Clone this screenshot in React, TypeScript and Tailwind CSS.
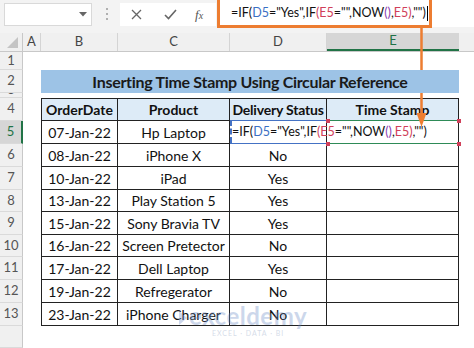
import React from "react";

const rows = [
  { n: 5, h: "h-[23px]", d: ["07-Jan-22", "Hp Laptop", ""] },
  { n: 6, h: "h-[23px]", d: ["08-Jan-22", "iPhone X", "No"] },
  { n: 7, h: "h-[23px]", d: ["10-Jan-22", "iPad", "Yes"] },
  { n: 8, h: "h-[22px]", d: ["13-Jan-22", "Play Station 5", "Yes"] },
  { n: 9, h: "h-[23px]", d: ["15-Jan-22", "Sony Bravia TV", "Yes"] },
  { n: 10, h: "h-[22px]", d: ["16-Jan-22", "Screen Pretector", "No"] },
  { n: 11, h: "h-[23px]", d: ["17-Jan-22", "Dell Laptop", "Yes"] },
  { n: 12, h: "h-[23px]", d: ["19-Jan-22", "Refregerator", "No"] },
  { n: 13, h: "h-[23px]", d: ["23-Jan-22", "iPhone Charger", "No"] },
];

function Formula() {
  return (
    <>
      <span>=IF(</span>
      <span className="text-[#3a6fc4]">D5</span>
      <span>="Yes",IF</span>
      <span className="text-[#d0405a]">(E5</span>
      <span>="",NOW</span>
      <span className="text-[#8a3ab0]">()</span>
      <span>,</span>
      <span className="text-[#d0405a]">E5)</span>
      <span>,"")</span>
    </>
  );
}

function RowHead({ n, active }: { n: number | string; active?: boolean }) {
  return (
    <div
      className={
        "w-[23px] shrink-0 h-full flex items-center justify-center text-[13px] border-b border-[#dadada] " +
        (active
          ? "bg-[#d6d6d6] text-[#217346] border-r-2 border-r-[#217346]"
          : "bg-[#f0f0f0] text-[#555] border-r border-r-[#c8c8c8]")
      }
    >
      {n}
    </div>
  );
}

export default function App() {
  return (
    <div className="w-[474px] h-[348px] relative overflow-hidden bg-white font-['Lato','Liberation_Sans',sans-serif] text-[#111]">
      {/* Formula bar */}
      <div className="h-[33px] bg-[#f3f3f3] flex items-start">
        <div className="mt-[3px] ml-[4px] w-[88px] h-[23px] bg-white border border-[#d9d9d9] flex items-center justify-end pr-[4px] shrink-0">
          <svg width="8" height="5" viewBox="0 0 8 5">
            <path d="M0 0 L8 0 L4 4.5 Z" fill="#666" />
          </svg>
        </div>
        <div className="ml-[13px] mt-[8px] flex flex-col gap-[3px] w-[4px] items-center shrink-0">
          <div className="w-[2px] h-[2px] bg-[#b0b0b0]" />
          <div className="w-[2px] h-[2px] bg-[#b0b0b0]" />
          <div className="w-[2px] h-[2px] bg-[#b0b0b0]" />
        </div>
        <div className="ml-[11px] mt-[3px] w-[96px] h-[23px] bg-white flex items-center shrink-0">
          <svg className="ml-[11px]" width="11" height="11" viewBox="0 0 11 11">
            <path d="M1 1 L10 10 M10 1 L1 10" stroke="#666" strokeWidth="1.3" />
          </svg>
          <svg className="ml-[22px]" width="13" height="11" viewBox="0 0 13 11">
            <path d="M1 6 L4.5 9.5 L12 1" stroke="#666" strokeWidth="1.6" fill="none" />
          </svg>
          <span className="ml-[18px] font-['Liberation_Serif',serif] italic text-[13px] text-[#555]">
            f<span className="text-[10px]">x</span>
          </span>
        </div>
        <div className="ml-[1px] flex-1 h-[27px] bg-white">
          <div className="w-[215px] h-[31px] -mt-[3px] border-[3px] border-[#ed7d31] flex items-center pl-[11px] text-[12.5px] whitespace-nowrap pt-[2px]">
            <span className="whitespace-nowrap shrink-0"><Formula /></span>
            <span className="ml-[1px] w-[1px] h-[15px] bg-black shrink-0" />
          </div>
        </div>
      </div>

      {/* Column headers */}
      <div className="h-[19px] flex bg-[#f0f0f0] text-[13px] text-[#444] border-b border-[#c8c8c8]">
        <div className="w-[23px] border-r border-[#c8c8c8] relative">
          <svg className="absolute right-[4px] bottom-[3px]" width="11" height="11" viewBox="0 0 11 11">
            <path d="M11 0 L11 11 L0 11 Z" fill="#c4c4c4" />
          </svg>
        </div>
        <div className="w-[18px] border-r border-[#d4d4d4] flex items-center justify-center">A</div>
        <div className="w-[77px] border-r border-[#d4d4d4] flex items-center justify-center">B</div>
        <div className="w-[112px] border-r border-[#d4d4d4] flex items-center justify-center">C</div>
        <div className="w-[97px] border-r border-[#d4d4d4] flex items-center justify-center">D</div>
        <div className="w-[132px] bg-[#d6d6d6] text-[#217346] border-b-2 border-[#217346] flex items-center justify-center">E</div>
        <div className="flex-1" />
      </div>

      {/* Row 1 */}
      <div className="h-[18px] flex">
        <RowHead n={1} />
      </div>
      {/* Row 2: title */}
      <div className="h-[23px] flex">
        <RowHead n={2} />
        <div className="w-[18px]" />
        <div className="w-[418px] bg-[#9dc3e6] flex items-center justify-center font-bold text-[16px] tracking-[-0.3px] text-[#1a1a1a] relative z-20">
          Inserting Time Stamp Using Circular Reference
        </div>
      </div>
      {/* Row 3 */}
      <div className="h-[5px] flex overflow-hidden">
        <div className="w-[23px] h-[5px] bg-[#f0f0f0] border-r border-[#c8c8c8] border-b border-b-[#dadada] overflow-hidden flex justify-center">
          <span className="text-[13px] text-[#555] leading-[13px] -mt-[10px]">3</span>
        </div>
      </div>
      {/* Row 4: header */}
      <div className="h-[23px] flex">
        <RowHead n={4} />
        <div className="w-[18px]" />
        <div className="w-[77px] bg-[#ddebf7] border-l border-t border-r border-b border-[#222] flex items-center justify-center font-bold text-[14px]">OrderDate</div>
        <div className="w-[112px] bg-[#ddebf7] border-t border-r border-b border-[#222] flex items-center justify-center font-bold text-[14px]">Product</div>
        <div className="w-[97px] bg-[#ddebf7] border-t border-r border-b border-[#222] border-b-[#4472c4] flex items-center justify-center font-bold text-[14px] tracking-[-0.2px] whitespace-nowrap">Delivery Status</div>
        <div className="w-[132px] bg-[#ddebf7] border-t border-r border-b border-[#222] border-b-[#2e8b57] flex items-center justify-center font-bold text-[14px]">Time Stamp</div>
      </div>

      {rows.map((r) => (
        <div key={r.n} className={r.h + " flex"}>
          <RowHead n={r.n} active={r.n === 5} />
          <div className="w-[18px]" />
          <div className="w-[77px] border-l border-r border-b border-[#222] flex items-center justify-center text-[14px]">{r.d[0]}</div>
          <div className="w-[112px] border-r border-b border-[#222] flex items-center justify-center text-[14px] whitespace-nowrap">{r.d[1]}</div>
          {r.n === 5 ? (
            <>
              <div className="w-[97px] border-r border-b border-[#222] border-b-[#4472c4] relative z-10">
                <div className="absolute left-0 -top-[1px] h-[23px] border-l-2 border-dashed border-[#4472c4]" />
                <div className="absolute left-[2px] top-0 h-full flex items-center text-[12.5px] whitespace-nowrap">
                  <Formula />
                </div>
              </div>
              <div className="w-[132px] border-r border-b border-[#222] border-b-[#2e8b57]" />
            </>
          ) : (
            <>
              <div className="w-[97px] border-r border-b border-[#222] flex items-center justify-center text-[14px]">{r.d[2]}</div>
              <div className="w-[132px] border-r border-b border-[#222]" />
            </>
          )}
        </div>
      ))}

      {/* Row 14 */}
      <div className="h-[22px] flex">
        <RowHead n="" />
      </div>

      {/* Reference handles */}
      <div className="absolute left-[326px] top-[119px] w-[4px] h-[4px] bg-[#d0405a] z-30" />
      <div className="absolute left-[457px] top-[119px] w-[4px] h-[4px] bg-[#d0405a] z-30" />
      <div className="absolute left-[326px] top-[142px] w-[4px] h-[4px] bg-[#d0405a] z-30" />
      <div className="absolute left-[457px] top-[142px] w-[4px] h-[4px] bg-[#d0405a] z-30" />

      {/* Orange arrow annotation */}
      <svg className="absolute left-0 top-0 z-10 pointer-events-none" width="474" height="348">
        <line x1="421.5" y1="27" x2="421.5" y2="116" stroke="#ed7d31" strokeWidth="2.5" />
        <polygon points="416.5,113 426.5,113 421.5,127" fill="#ed7d31" />
      </svg>

      {/* Watermark */}
      <div className="absolute left-[177px] top-[303px] z-30 opacity-35 flex items-start pointer-events-none">
        <svg width="12" height="18" viewBox="0 0 12 18" className="mt-[6px]">
          <path d="M2 2 L10 9 L2 16 Z" fill="#6f8fc8" />
        </svg>
        <div className="flex flex-col items-center">
          <span className="text-[24px] leading-[26px] font-bold text-[#6f8fc8] tracking-[0.5px]">exceldemy</span>
          <span className="text-[7px] leading-[8px] text-[#8a9cc0] tracking-[1px]">EXCEL · DATA · BI</span>
        </div>
      </div>
    </div>
  );
}
